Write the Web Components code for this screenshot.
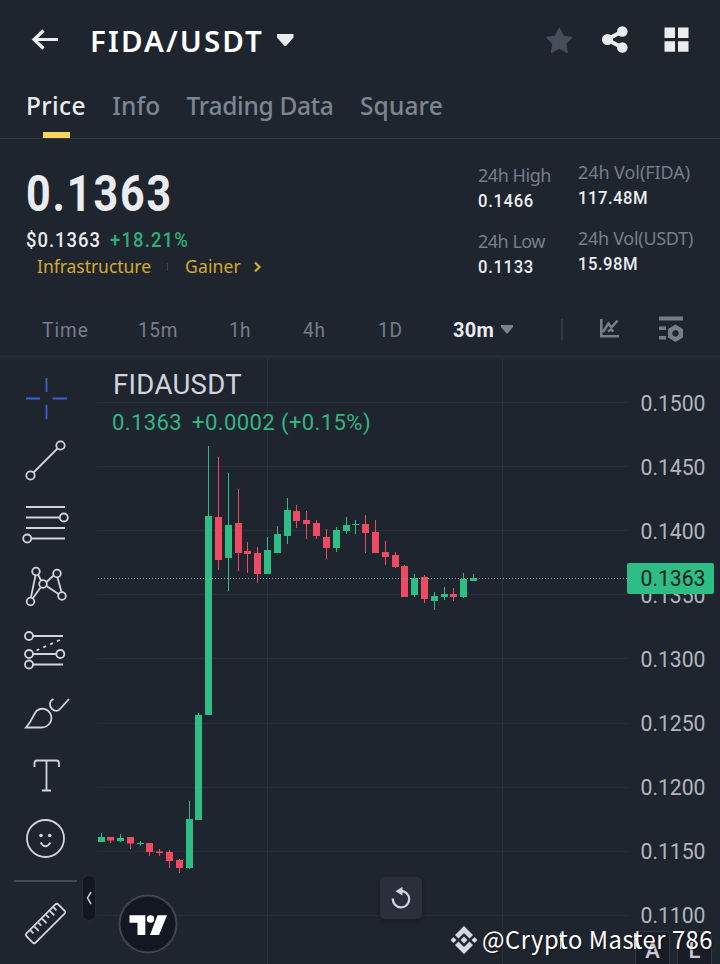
<!DOCTYPE html>
<html lang="en">
<head>
<meta charset="utf-8">
<title>FIDA/USDT</title>
<style>
  html, body { margin: 0; background: #1f252f; }
  body { width: 720px; height: 964px; overflow: hidden; font-family: Roboto, "Liberation Sans", sans-serif; color: #eaecef; }
</style>
</head>
<body>
<market-page>
  <pair-header>FIDA/USDT</pair-header>
  <tab-bar>
    <tab-item active width="60">Price</tab-item>
    <tab-item width="48">Info</tab-item>
    <tab-item width="147">Trading Data</tab-item>
    <tab-item width="83">Square</tab-item>
  </tab-bar>
  <price-summary>
    <stat-item label="24h High" label-width="73" width="56">0.1466</stat-item>
    <stat-item label="24h Vol(FIDA)" label-width="112" width="70">117.48M</stat-item>
    <stat-item label="24h Low" label-width="67" width="56">0.1133</stat-item>
    <stat-item label="24h Vol(USDT)" label-width="115" width="60">15.98M</stat-item>
  </price-summary>
  <interval-bar></interval-bar>
  <chart-panel></chart-panel>
</market-page>

<script>
// Text that is spread over a given width with letter spacing.
// squeeze makes the glyphs themselves narrower first
class FitText extends HTMLElement {
  constructor() {
    super();
    this.attachShadow({ mode: 'open' });
    this.shadowRoot.innerHTML = `
      <style>
        :host { display: block; }
        span { display: inline-block; white-space: pre; transform-origin: 0 50%; }
      </style>
      <span><slot></slot></span>
    `;
  }

  connectedCallback() {
    const span = this.shadowRoot.querySelector('span');
    const width = parseFloat(this.getAttribute('width'));
    const squeeze = parseFloat(this.getAttribute('squeeze')) || 1;
    const chars = this.textContent.length;
    if (!width || !chars) return;
    span.style.letterSpacing = '0px';
    const natural = span.getBoundingClientRect().width;
    span.style.letterSpacing = (width / squeeze - natural) / chars + 'px';
    if (squeeze !== 1) span.style.transform = `scaleX(${squeeze})`;
    this.style.width = width + 'px';
  }
}

class MarketPage extends HTMLElement {
  constructor() {
    super();
    this.attachShadow({ mode: 'open' });
    this.shadowRoot.innerHTML = `
      <style>
        :host { display: flex; flex-direction: column; width: 720px; height: 964px; overflow: hidden; background: #1f252f; }
      </style>
      <slot></slot>
    `;
  }
}

class PairHeader extends HTMLElement {
  constructor() {
    super();
    this.attachShadow({ mode: 'open' });
    this.shadowRoot.innerHTML = `
      <style>
        :host { display: flex; align-items: center; height: 80px; padding: 0 31px; box-sizing: border-box; }
        svg { display: block; }
        h1 { margin: 0 12px 0 31px; padding-top: 1px; font: 600 29.5px/40px "Noto Sans", "Open Sans", sans-serif; color: #fff; }
        .actions { display: flex; align-items: center; gap: 29px; margin-left: auto; }
      </style>
      <svg width="28" height="24" viewBox="31 28 28 24" fill="none" stroke="#eaecef" stroke-width="3.2">
        <path d="M58 39.5H34M43.500 30.500L34 39.500L43.500 48.500"/>
      </svg>
      <h1><fit-text width="174">${this.textContent}</fit-text></h1>
      <svg width="18" height="14" viewBox="276 33 18 14" fill="#eaecef">
        <path d="M277 34H293.500V37.500L286.500 45.500Q285.200 46.600 284 45.500L277 37.500Z"/>
      </svg>
      <div class="actions">
        <svg width="28" height="28" viewBox="544 26 28 28" fill="#474d59" stroke="#474d59" stroke-width="1.500" stroke-linejoin="round">
          <path d="M559.300 28.500L563.200 36.300L571.700 37.500L565.600 43.500L567.200 52.300L559.300 48.200L551.600 52.300L553 43.500L547 37.500L555.500 36.300Z"/>
        </svg>
        <svg width="28" height="28" viewBox="601 26 28 28" fill="#eaecef">
          <path d="M607 39.500L622 31.500M607 39.500L622 47.500" stroke="#eaecef" stroke-width="4"/>
          <circle cx="607.500" cy="39.500" r="5.500"/><circle cx="622.300" cy="31.500" r="5.300"/><circle cx="622.300" cy="47.500" r="5.300"/>
        </svg>
        <svg class="grid" width="32" height="28" viewBox="657 26 32 28" fill="#eaecef" style="margin-left:-1px">
          <path d="M664.500 27.500h10.500v10.500h-10.500zM678 27.500h10.500v10.500h-10.500zM664.500 41.200h10.500v10.500h-10.500zM678 41.200h10.500v10.500h-10.500z"/>
        </svg>
      </div>
    `;
  }
}

class TabBar extends HTMLElement {
  constructor() {
    super();
    this.attachShadow({ mode: 'open' });
    this.shadowRoot.innerHTML = `
      <style>
        :host { display: flex; gap: 26.300px; height: 59px; padding-left: 26px; box-sizing: border-box; border-bottom: 1px solid #323841; }
      </style>
      <slot></slot>
    `;
  }
}

class TabItem extends HTMLElement {
  constructor() {
    super();
    this.attachShadow({ mode: 'open' });
    this.shadowRoot.innerHTML = `
      <style>
        :host { display: flex; flex-direction: column; justify-content: space-between; align-items: center; padding-top: 10px; font: 500 24.500px/32px "Noto Sans", "Open Sans", sans-serif; color: #7d8592; }
        :host([active]) { color: #eaecef; }
        i { width: 27px; height: 6px; }
        :host([active]) i { background: #f5d55b; }
      </style>
      <fit-text width="${this.getAttribute('width')}">${this.textContent}</fit-text>
      <i></i>
    `;
  }
}

class StatItem extends HTMLElement {
  constructor() {
    super();
    this.attachShadow({ mode: 'open' });
    this.shadowRoot.innerHTML = `
      <style>
        :host { display: block; height: 66px; }
        .label { font: 400 18px/26px "Noto Sans", "Open Sans", sans-serif; color: #767e8b; }
        .value { font: 500 18.500px/26px Roboto, sans-serif; color: #eaecef; }
      </style>
      <fit-text class="label" width="${this.getAttribute('label-width')}">${this.getAttribute('label')}</fit-text>
      <fit-text class="value" squeeze="0.9" width="${this.getAttribute('width')}">${this.textContent}</fit-text>
    `;
  }
}

class PriceSummary extends HTMLElement {
  constructor() {
    super();
    this.attachShadow({ mode: 'open' });
    this.shadowRoot.innerHTML = `
      <style>
        :host { display: flex; justify-content: space-between; height: 164px; padding: 0 14px 0 26px; box-sizing: border-box; }
        .price { padding-top: 27px; font: 700 50px/56px Roboto, sans-serif; }
        .change { display: flex; gap: 9px; padding-top: 5px; font: 500 20.500px/26px Roboto, sans-serif; }
        .up { color: #2fae7c; }
        .tags { display: flex; align-items: center; padding-left: 11px; font: 400 17.500px/27px "Noto Sans", "Open Sans", sans-serif; color: #d3ab2f; }
        .tags i { width: 1px; height: 8px; margin: 0 17px 0 16px; background: #3b414b; }
        .tags svg { margin-left: 12px; }
        .stats { display: grid; grid-template-columns: 100px 128px; padding-top: 20px; align-content: start; }
        ::slotted(:nth-child(odd)) { padding-top: 3px; box-sizing: border-box; }
      </style>
      <div>
        <fit-text class="price" squeeze="0.86" width="147">0.1363</fit-text>
        <div class="change">
          <fit-text squeeze="0.9" width="75">$0.1363</fit-text>
          <fit-text class="up" squeeze="0.9" width="79">+18.21%</fit-text>
        </div>
        <div class="tags">
          <fit-text width="114">Infrastructure</fit-text><i></i><fit-text width="56">Gainer</fit-text>
          <svg width="10" height="12" viewBox="0 0 10 12" fill="none" stroke="#d3ab2f" stroke-width="2.200"><path d="M2 1.500L6.500 6L2 10.500"/></svg>
        </div>
      </div>
      <div class="stats"><slot></slot></div>
    `;
  }
}

class IntervalBar extends HTMLElement {
  constructor() {
    super();
    this.attachShadow({ mode: 'open' });
    this.intervals = [['Time', 47], ['15m', 40], ['1h', 22], ['4h', 23], ['1D', 25]];
    this.render();
  }

  render() {
    this.shadowRoot.innerHTML = `
      <style>
        :host { display: grid; grid-template-columns: 96px 91px 74px 75px 75px 108px 37px 61px 30px; align-items: center; height: 55px; padding-left: 42px; box-sizing: border-box; border-bottom: 3px solid #272d37; font-size: 20px; line-height: 26px; color: #767e8b; }
        fit-text { position: relative; top: 1px; }
        .active { display: flex; align-items: center; gap: 7px; font-weight: 700; color: #eaecef; }
        .sep { width: 2px; height: 21px; background: #343a44; }
        svg { display: block; }
      </style>
      ${this.intervals.map(([name, width]) => `<fit-text squeeze="0.95" width="${width}">${name}</fit-text>`).join('')}
      <div class="active">
        <fit-text width="41">30m</fit-text>
        <svg width="12" height="9" viewBox="0 0 12 9" fill="#7a818c"><path d="M0 0H12V2L7 8Q6 9 5 8L0 2Z"/></svg>
      </div>
      <div class="sep"></div>
      <svg width="22" height="22" viewBox="599 318 22 22" fill="none" stroke="#767d88" stroke-width="2.600">
        <path d="M602.300 319V336.300H620M604 332L609.500 323.500L612.500 327.500L618.500 320.500M609 331.500L612 329.500L614.500 331.500" />
      </svg>
      <svg width="26" height="26" viewBox="660 316 26 26" fill="#767d88">
        <path d="M660 316.500h24v4h-24zM660 326.500h7v3.500h-7zM660 336h7v3.500h-7z"/>
        <path fill-rule="evenodd" d="M676.500 324.500L684 329V337.500L676.500 342L669 337.500V329ZM676.500 330a3.300 3.300 0 1 0 .01 0Z"/>
      </svg>
    `;
  }
}

// Each tool is drawn in a 97x63 cell, with y counted from the top of the first one
const TOOLS = [
  '<path stroke="#3d63c6" d="M46.500 11V25M46.500 38V52M26 31.500H40M52.500 31.500H67"/>',
  '<path d="M33.500 105.500L57.500 81.500"/><circle cx="60.500" cy="78.500" r="4.200"/><circle cx="30.500" cy="108.500" r="4.200"/>',
  '<path d="M26 140H65M26 150.500H59.500M26 161H65M31.500 171.500H65"/><circle cx="63.800" cy="150.500" r="4"/><circle cx="27.200" cy="171.500" r="4"/>',
  '<path d="M35.500 208.500L31 230M38 207.500L41 213.500M40.500 220.500L33 231M46.500 215L53.500 208.500M57.500 210.500L61.500 225M46.500 219L58.500 227"/><circle cx="36" cy="204.500" r="3.800"/><circle cx="57" cy="206.500" r="3.800"/><circle cx="43" cy="217" r="3.800"/><circle cx="30.500" cy="234.500" r="3.800"/><circle cx="62" cy="229" r="3.800"/>',
  '<path d="M33 269H63M33 287H56.500M33 297.500H63"/><path stroke-dasharray="3 4.500" d="M36.500 283.500L62 272"/><circle cx="29" cy="269" r="4"/><circle cx="29" cy="287" r="4"/><circle cx="60.300" cy="287" r="4"/><circle cx="29" cy="297.500" r="4"/>',
  '<path d="M26 360.500C33 353 33 347 37 343.500C41 340.500 47 341.500 50 346C54 353 49 360.500 41 360.500ZM53.500 332C49 334 49 339 52 342C55 344.500 58 344.500 60.500 341.500L69 332"/>',
  '<path d="M34.500 400V396.500Q34.500 393.500 37 393.500H56.500Q59 393.500 59 396.500V400M46.500 393.500V423.500M42 423.500H51"/>',
  '<circle cx="45.500" cy="471.500" r="18.500"/><path d="M40.500 475.500Q45.500 483 50.500 475.500"/><circle cx="41" cy="468.500" r="1.800" fill="#d1d4dc" stroke="none"/><circle cx="49.700" cy="468.500" r="1.800" fill="#d1d4dc" stroke="none"/>'
];

class ChartTools extends HTMLElement {
  constructor() {
    super();
    this.attachShadow({ mode: 'open' });
    this.shadowRoot.innerHTML = `
      <style>
        :host { display: flex; flex-direction: column; width: 97px; padding-top: 9px; box-sizing: border-box; }
        svg { display: block; flex: none; fill: none; stroke: #d1d4dc; stroke-width: 1.800; }
        hr { width: 63px; height: 2px; margin: 9px 0 0 14px; border: 0; background: #434a54; }
      </style>
      ${TOOLS.map((icon, i) => `<svg width="97" height="63" viewBox="0 ${i * 63} 97 63">${icon}</svg>`).join('')}
      <hr>
      <svg width="97" height="82" viewBox="0 882 97 82">
        <g transform="translate(45.500 923.500) rotate(-45)">
          <rect x="-22.500" y="-6.500" width="45" height="13" rx="2"/>
          <path d="M-15.500 -6V-1.500M-10 -6V.5M-4.500 -6V-1.500M1 -6V.5M6.500 -6V-1.500M12 -6V.5M17 -6V-1.500"/>
        </g>
      </svg>
    `;
  }
}

// [left, high, body top, body bottom, low, rising]
const CANDLES = [
  [98, 833, 837, 842, 842, 1], [107, 837, 837, 840.5, 843, 0], [117, 834, 838, 841, 842, 1],
  [127, 837, 837, 843.5, 849, 0], [137, 841, 843, 844, 846, 1], [146, 843, 843, 852, 856, 0],
  [156, 849, 851.5, 853, 856, 0], [166, 850, 852, 861, 868, 0], [176, 859, 860, 868, 873, 0],
  [186, 801, 819, 868, 869, 1], [195, 713, 715, 820, 820, 1], [205, 446, 516, 715, 715, 1],
  [215, 457, 517, 560, 570, 0], [225, 473, 525, 558, 591, 1], [235, 489, 523, 553, 571, 0],
  [244, 542, 551, 554, 573, 0], [254, 547, 553, 574, 583, 0], [264, 537, 550, 574, 574, 1],
  [274, 526, 534, 553, 553, 1], [284, 498, 510, 536, 544, 1], [293, 505, 511, 521, 528, 0],
  [303, 511, 520, 524, 539, 0], [313, 520, 523, 536, 539, 0], [323, 529, 537, 548, 559, 0],
  [333, 527, 530, 548, 552, 1], [343, 517, 525, 531, 534, 1], [352, 520, 524, 525, 534, 1],
  [362, 515, 524, 533, 553, 0], [372, 520, 532, 553, 553, 0], [382, 541, 552, 557, 565, 0],
  [392, 552, 555, 567, 568, 0], [401, 565, 566, 597, 597, 0], [411, 574, 578, 595, 597, 1],
  [421, 575, 577, 599, 603, 0], [431, 592, 596, 601, 610, 1], [441, 587, 594, 597, 600, 1],
  [450, 588, 594, 597, 601, 0], [460, 573, 579, 597, 598, 1], [470, 574, 578, 581, 581, 1]
];

class CandlePlot extends HTMLElement {
  constructor() {
    super();
    this.attachShadow({ mode: 'open' });
    this.render();
  }

  render() {
    let grid = '';
    for (let i = 0; i < 9; i++) {
      grid += `<path d="M97 ${Math.round(402 + i * 64.1) + .5}H627"/>`;
    }
    grid += '<path d="M267.500 358V964M502.500 358V964"/>';

    let bars = '';
    for (const [x, high, top, bottom, low, up] of CANDLES) {
      const color = up ? '#2ebd85' : '#ee4b63';
      bars += `<rect x="${x + 3}" y="${high}" width="1" height="${low - high}" fill="${color}"/>`;
      bars += `<rect x="${x}" y="${top}" width="7" height="${bottom - top}" fill="${color}"/>`;
    }

    this.shadowRoot.innerHTML = `
      <style>
        :host { display: block; width: 530px; height: 606px; position: relative; }
        svg { display: block; }
        .legend { position: absolute; left: 15px; top: 10px; }
        .name { padding-left: 1px; font-size: 27.500px; line-height: 34px; color: #d1d4dc; }
        .quote { display: flex; gap: 10px; padding-top: 8px; font-size: 22px; line-height: 26px; color: #33b581; }
        .logo { position: absolute; left: 21px; top: 536px; }
        .reset { position: absolute; left: 283px; top: 519px; display: grid; place-items: center; width: 42px; height: 42px; border-radius: 5px; background: #2a303b; box-shadow: 0 2px 4px #11151c99; }
        .collapse { position: absolute; left: -15px; top: 517px; display: grid; place-items: center; width: 14px; height: 46px; border-radius: 7px; background: #131722; border: 1px solid #262c36; box-sizing: border-box; }
      </style>
      <svg width="530" height="606" viewBox="97 358 530 606">
        <g stroke="#292f39" fill="none">${grid}</g>
        ${bars}
        <path d="M98 578.500H627" stroke="#6fa894" stroke-dasharray="1 2"/>
      </svg>
      <div class="legend">
        <fit-text class="name" width="129">FIDAUSDT</fit-text>
        <div class="quote">
          <fit-text width="70">0.1363</fit-text>
          <fit-text width="179">+0.0002 (+0.15%)</fit-text>
        </div>
      </div>
      <div class="collapse">
        <svg width="6" height="14" viewBox="0 0 6 14" fill="none" stroke="#c5c9d1" stroke-width="1.500"><path d="M5 1L1.500 7L5 13"/></svg>
      </div>
      <svg class="logo" width="60" height="60" viewBox="118 894 60 60">
        <circle cx="148" cy="924" r="28.500" fill="#131722" stroke="#41454f" stroke-width="2"/>
        <path fill="#fff" d="M129.500 915.300H145.300V935H137.500V922.800H129.500ZM157.500 915.300H167L159 935H150Z"/>
        <circle cx="150.500" cy="919" r="3.700" fill="#fff"/>
      </svg>
      <div class="reset">
        <svg width="22" height="24" viewBox="390 886 22 24">
          <path d="M392.800 898.500A8.200 8.200 0 1 0 401 891" fill="none" stroke="#d1d4dc" stroke-width="2.300"/>
          <path d="M395.500 891.200L402.500 886.800V895.500Z" fill="#d1d4dc"/>
        </svg>
      </div>
    `;
  }
}

class PriceAxis extends HTMLElement {
  constructor() {
    super();
    this.attachShadow({ mode: 'open' });
    const labels = ['0.1500', '0.1450', '0.1400', '0.1350', '0.1300', '0.1250', '0.1200', '0.1150', '0.1100'];
    this.shadowRoot.innerHTML = `
      <style>
        :host { display: block; width: 93px; height: 606px; position: relative; padding: 13.500px 0 0 13.500px; box-sizing: border-box; font-size: 21.200px; color: #b2b5be; }
        .row { height: 64.100px; line-height: 64.100px; }
        .last { position: absolute; left: 0; top: 205px; width: 87px; height: 31px; padding-left: 13.500px; line-height: 32px; box-sizing: border-box; border-radius: 2px; background: #2ebd85; color: #10221d; }
        .modes { position: absolute; left: 8px; top: 573px; display: flex; gap: 7px; }
        .modes span { width: 35px; height: 40px; padding-top: 6px; line-height: 26px; font-size: 22px; font-weight: 500; text-align: center; box-sizing: border-box; border: 1px solid #343943; border-radius: 4px; background: #181c27; color: #c6cad2; }
      </style>
      ${labels.map(label => `<fit-text class="row" width="65">${label}</fit-text>`).join('')}
      <div class="last"><fit-text width="65">0.1363</fit-text></div>
      <div class="modes"><span>A</span><span>L</span></div>
    `;
  }
}

class AuthorMark extends HTMLElement {
  constructor() {
    super();
    this.attachShadow({ mode: 'open' });
    this.shadowRoot.innerHTML = `
      <style>
        :host { display: flex; align-items: center; gap: 4px; font: 400 24.500px/32px "Noto Sans CJK SC", "Noto Sans", sans-serif; color: #fff; text-shadow: 1px 1px 1px #0009; }
        svg { flex: none; }
        fit-text { position: relative; top: -1px; }
        .ticks { position: absolute; left: 110px; top: 7px; }
      </style>
      <svg width="28" height="28" viewBox="-14 -14 28 28" fill="#d5d9e2">
        <path d="M0 -14L9 -5L5.500 -1.500L0 -7L-5.500 -1.500L-9 -5ZM0 14L9 5L5.500 1.500L0 7L-5.500 1.500L-9 5ZM0 -3.500L3.500 0L0 3.500L-3.500 0ZM-10.500 -3L-7.500 0L-10.500 3L-13.500 0ZM10.500 -3L13.500 0L10.500 3L7.500 0Z"/>
      </svg>
      <fit-text squeeze="0.97" width="231">${this.textContent}</fit-text>
      <svg class="ticks" width="84" height="20" viewBox="0 0 84 20" fill="none" stroke="#fff" stroke-width="1.500">
        <path d="M0 2V18M1 7L5 18M75 2V18M76 7L80 18"/>
      </svg>
    `;
  }
}

class ChartPanel extends HTMLElement {
  constructor() {
    super();
    this.attachShadow({ mode: 'open' });
    this.shadowRoot.innerHTML = `
      <style>
        :host { display: flex; height: 606px; position: relative; }
        author-mark { position: absolute; left: 450px; top: 566px; }
      </style>
      <chart-tools></chart-tools>
      <candle-plot></candle-plot>
      <price-axis></price-axis>
      <author-mark>@Crypto Master 786</author-mark>
    `;
  }
}

customElements.define('fit-text', FitText);
customElements.define('market-page', MarketPage);
customElements.define('pair-header', PairHeader);
customElements.define('tab-bar', TabBar);
customElements.define('tab-item', TabItem);
customElements.define('stat-item', StatItem);
customElements.define('price-summary', PriceSummary);
customElements.define('interval-bar', IntervalBar);
customElements.define('chart-tools', ChartTools);
customElements.define('candle-plot', CandlePlot);
customElements.define('price-axis', PriceAxis);
customElements.define('chart-panel', ChartPanel);
customElements.define('author-mark', AuthorMark);
</script>
</body>
</html>
